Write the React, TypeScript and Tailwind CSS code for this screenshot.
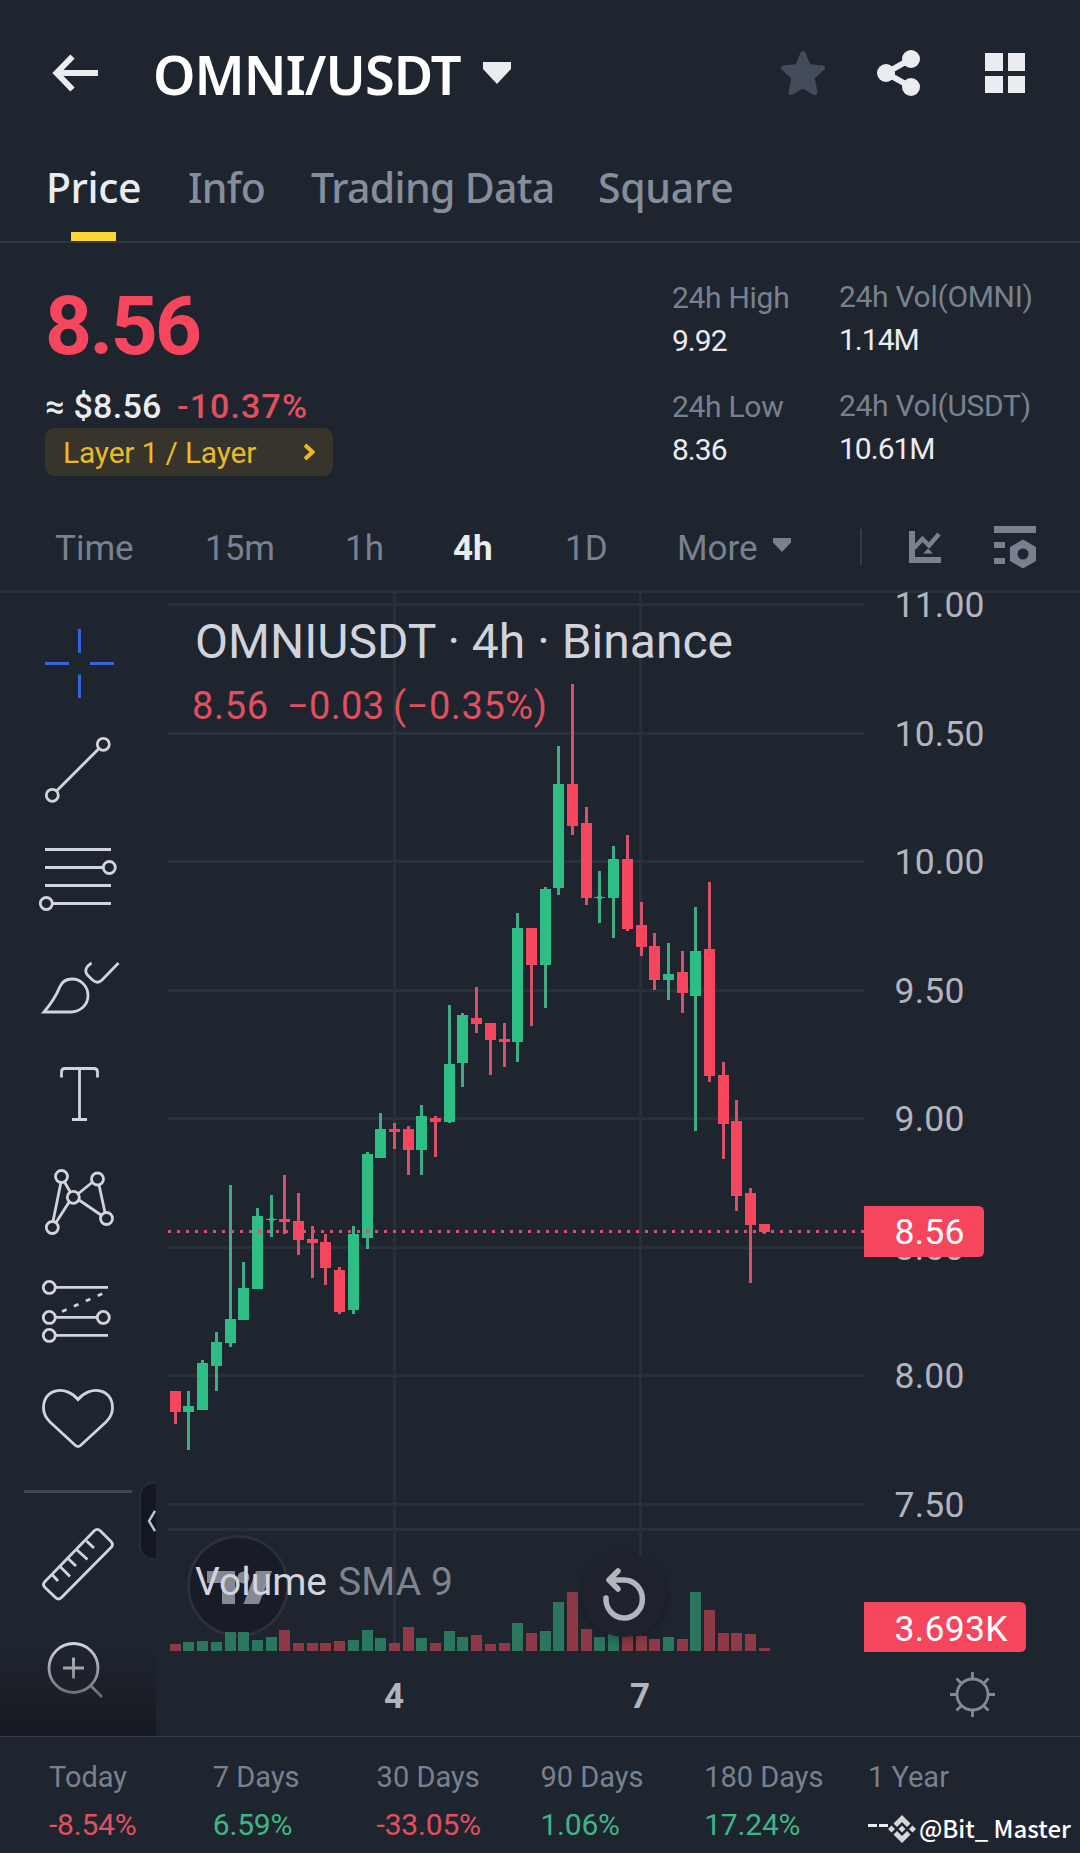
import React from "react";

const UP = "#2ebd85";
const DOWN = "#f6465d";
const INK = "#d1d4dc";

// [high, body top, body bottom, low, volume, rising]
const candles: [number, number, number, number, number, 0 | 1][] = [
  [1391, 1391, 1412, 1424, 7, 0],
  [1391, 1406, 1412, 1450, 9, 1],
  [1360, 1363, 1410, 1410, 10, 1],
  [1332, 1342, 1366, 1391, 9, 1],
  [1185, 1319, 1343, 1347, 19, 1],
  [1262, 1288, 1320, 1320, 19, 1],
  [1208, 1216, 1289, 1289, 11, 1],
  [1195, 1219, 1220, 1237, 14, 1],
  [1175, 1219, 1222, 1234, 21, 0],
  [1193, 1221, 1240, 1255, 8, 0],
  [1226, 1239, 1243, 1278, 8, 0],
  [1234, 1242, 1268, 1285, 8, 0],
  [1267, 1270, 1312, 1314, 10, 0],
  [1226, 1234, 1310, 1314, 11, 1],
  [1152, 1154, 1238, 1249, 21, 1],
  [1113, 1129, 1158, 1158, 13, 1],
  [1123, 1129, 1132, 1149, 8, 0],
  [1126, 1129, 1150, 1175, 24, 0],
  [1105, 1116, 1150, 1175, 13, 1],
  [1116, 1118, 1122, 1157, 8, 0],
  [1005, 1064, 1122, 1123, 20, 1],
  [1013, 1015, 1063, 1087, 14, 1],
  [987, 1018, 1024, 1033, 16, 0],
  [1023, 1023, 1040, 1075, 7, 0],
  [1023, 1039, 1042, 1067, 8, 0],
  [913, 928, 1042, 1062, 28, 1],
  [928, 928, 965, 1026, 18, 0],
  [887, 889, 965, 1008, 20, 1],
  [746, 784, 888, 895, 49, 1],
  [684, 784, 826, 835, 59, 0],
  [807, 823, 898, 905, 22, 0],
  [871, 897, 898, 923, 14, 1],
  [846, 859, 898, 938, 18, 1],
  [835, 859, 929, 931, 18, 0],
  [902, 925, 947, 956, 15, 0],
  [933, 946, 980, 990, 12, 0],
  [943, 974, 980, 1000, 14, 1],
  [951, 972, 993, 1013, 12, 0],
  [907, 951, 996, 1131, 59, 1],
  [882, 949, 1076, 1082, 41, 0],
  [1062, 1075, 1124, 1159, 18, 0],
  [1100, 1121, 1196, 1211, 18, 0],
  [1188, 1193, 1225, 1283, 17, 0],
  [1224, 1224, 1232, 1234, 3, 0],
];

const priceLines = [
  { label: "11.00", y: 604.5 },
  { label: "10.50", y: 733.5 },
  { label: "10.00", y: 861.5 },
  { label: "9.50", y: 990.5 },
  { label: "9.00", y: 1118.5 },
  { label: "8.50", y: 1247.5 },
  { label: "8.00", y: 1375.5 },
  { label: "7.50", y: 1504.5 },
];

const candleX = (i: number) => 175.5 + Math.floor(i * 13.7 + 0.25);

const performance = [
  { label: "Today", value: "-8.54%", color: "text-[#e0505f]" },
  { label: "7 Days", value: "6.59%", color: "text-[#3fb586]" },
  { label: "30 Days", value: "-33.05%", color: "text-[#e0505f]" },
  { label: "90 Days", value: "1.06%", color: "text-[#3fb586]" },
  { label: "180 Days", value: "17.24%", color: "text-[#3fb586]" },
];

function Caret({ className }: { className: string }) {
  return (
    <svg viewBox="0 0 28 22" preserveAspectRatio="none" className={className}>
      <path d="M0 0H28V7L14 22L0 7Z" fill="currentColor" />
    </svg>
  );
}

function Header() {
  return (
    <header className="flex h-[146px] items-center pl-[52px] pr-[55px] text-[#eaecef]">
      <svg viewBox="0 0 46 38" className="h-[38px] w-[46px]">
        <path
          d="M46 19H5M20.5 2.5L4.5 19L20.5 35.5"
          fill="none"
          stroke="currentColor"
          strokeWidth="6"
        />
      </svg>
      <h1 className="ml-[55px] w-[330px] whitespace-nowrap pt-0.5 font-['Noto_Sans',sans-serif] text-[54px] font-semibold tracking-[-0.9px] text-white">
        OMNI/USDT
      </h1>
      <Caret className="h-[22px] w-7" />
      <svg
        viewBox="0 0 44 46"
        className="ml-auto h-[46px] w-11 text-[#434c5a]"
        fill="currentColor"
        stroke="currentColor"
        strokeWidth="5"
        strokeLinejoin="round"
      >
        <path d="M22 3.5L27.5 16.5L41.5 18L31 27.5L34 42.5L22 35.5L10 42.5L13 27.5L2.5 18L16.5 16.5Z" />
      </svg>
      <svg viewBox="0 0 43 46" className="ml-[52px] h-[46px] w-[43px]">
        <path
          d="M34 9L9 23L34 37"
          fill="none"
          stroke="currentColor"
          strokeWidth="6"
        />
        <circle cx="34" cy="9" r="9" fill="currentColor" />
        <circle cx="9" cy="23" r="9" fill="currentColor" />
        <circle cx="34" cy="37" r="9" fill="currentColor" />
      </svg>
      <div className="ml-[65px] grid h-10 w-10 grid-cols-2 gap-[5px]">
        <span className="bg-[#eaecef]" />
        <span className="bg-[#eaecef]" />
        <span className="bg-[#eaecef]" />
        <span className="bg-[#eaecef]" />
      </div>
    </header>
  );
}

function PageTabs() {
  return (
    <nav className="grid h-[97px] grid-cols-[144px_123px_287px_auto] border-b-2 border-[#2f3742] pl-11 font-['Noto_Sans',sans-serif] text-[41px] font-medium leading-[82px] tracking-[-0.7px] text-[#848e9c]">
      <div className="flex w-[99px] flex-col items-center">
        <span className="tracking-[-0.4px] text-[#eaecef]">Price</span>
        <span className="mt-1 h-[9px] w-[45px] bg-[#fcd535]" />
      </div>
      <span>Info</span>
      <span className="whitespace-nowrap">Trading Data</span>
      <span className="tracking-[-0.3px]">Square</span>
    </nav>
  );
}

function Stat({ label, value }: { label: string; value: string }) {
  return (
    <div className="mb-[26px] whitespace-nowrap text-[30px] leading-10">
      <p className="tracking-[-0.3px] text-[#788190]">{label}</p>
      <p className="mt-[3px] tracking-[-1px] text-[#eaecef]">{value}</p>
    </div>
  );
}

function Summary() {
  return (
    <section className="flex h-[261px] pl-[45px]">
      <div className="w-[627px] pt-[42px]">
        <p className="text-[82px] font-bold leading-[83px] tracking-[-2.6px] text-[#f6465d]">
          8.56
        </p>
        <p className="mt-4 flex text-[34px] font-medium leading-[44px]">
          <span className="w-[132px] tracking-[0.3px] text-[#eaecef]">
            ≈ $8.56
          </span>
          <span className="tracking-[1.1px] text-[#e0505f]">-10.37%</span>
        </p>
        <div className="flex h-12 w-[288px] items-center justify-between rounded-[9px] bg-[#37342c] pl-[18px] pr-[18px] text-[#e9b92c]">
          <span className="text-[30px] tracking-[-0.2px]">Layer 1 / Layer</span>
          <svg viewBox="0 0 12 18" className="h-[18px] w-3">
            <path
              d="M2 2L9.5 9L2 16"
              fill="none"
              stroke="currentColor"
              strokeWidth="4"
            />
          </svg>
        </div>
      </div>
      <div className="w-[167px] pt-[35px]">
        <Stat label="24h High" value="9.92" />
        <Stat label="24h Low" value="8.36" />
      </div>
      <div className="pt-[34px]">
        <Stat label="24h Vol(OMNI)" value="1.14M" />
        <Stat label="24h Vol(USDT)" value="10.61M" />
      </div>
    </section>
  );
}

function Intervals() {
  return (
    <nav className="flex h-[89px] items-center border-b-[3px] border-[#29303b] pl-[55px] text-[35px] leading-[56px] text-[#788190]">
      <span className="w-[150px] pt-[3px]">Time</span>
      <span className="w-[140px] pt-[3px]">15m</span>
      <span className="w-[108px] pt-[3px]">1h</span>
      <span className="w-[112px] pt-[3px] font-bold text-[#eaecef]">4h</span>
      <span className="w-[112px] pt-[3px]">1D</span>
      <span className="w-24 pt-[3px]">More</span>
      <Caret className="-mt-1 h-3.5 w-[18px]" />
      <span className="ml-[69px] h-9 w-0.5 bg-[#343c48]" />
      <svg viewBox="0 0 32 32" className="ml-[47px] h-8 w-8">
        <path
          d="M3 0V29H32"
          fill="none"
          stroke="currentColor"
          strokeWidth="6"
        />
        <path
          d="M5 17L13.5 8L20 14.5L30 3"
          fill="none"
          stroke="currentColor"
          strokeWidth="4.5"
        />
        <path d="M19 17.5L24 22.5H14Z" fill="currentColor" />
      </svg>
      <svg
        viewBox="0 0 42 42"
        className="ml-[53px] h-[42px] w-[42px]"
        fill="currentColor"
      >
        <path d="M0 0H42V7H0ZM0 16H11V22H0ZM0 32H11V38H0Z" />
        <path
          fillRule="evenodd"
          d="M29 13.5L42 21V35L29 42.5L16 35V21ZM29 22.5A5.5 5.5 0 1 0 29 33.5A5.5 5.5 0 1 0 29 22.5Z"
        />
      </svg>
    </nav>
  );
}

function Tool({ children }: { children: React.ReactNode }) {
  return (
    <svg
      viewBox="0 0 156 108"
      className="h-[108px] w-[156px] shrink-0"
      fill="none"
      stroke={INK}
      strokeWidth="2.8"
    >
      {children}
    </svg>
  );
}

function Toolbar() {
  return (
    <aside className="relative flex w-[156px] shrink-0 flex-col pt-4">
      <Tool>
        <path
          d="M79.5 20V44M79.5 65.5V89M45 54.5H69M90 54.5H114"
          stroke="#3763dd"
          strokeWidth="3"
        />
      </Tool>
      <Tool>
        <circle cx="103.3" cy="27.3" r="6" />
        <circle cx="52.3" cy="78.3" r="6" />
        <path d="M99 31.5L56.5 74" />
      </Tool>
      <Tool>
        <path d="M45 24.5H111M45 42.5H103M45 60.5H111M53 78.5H111" />
        <circle cx="109.3" cy="42.5" r="6" />
        <circle cx="46.3" cy="78.5" r="6" />
      </Tool>
      <Tool>
        <path d="M44 79H71C80 79 88 72 88 62.5C88 53.5 81 46 72 46C66 46 62 49 60 53.5C57.5 59.5 55 66 44 79Z" />
        <path d="M91.5 30C86 33.5 84 38 87.5 42L92.5 47C96 50 99 50 102 47L118.500 30" />
      </Tool>
      <Tool>
        <path d="M61.5 36.5V31C61.5 28.5 62.5 27.5 65 27.5H94C96.5 27.5 97.5 28.5 97.5 31V36.5M79.5 27.5V78.5M72 78.5H87" />
      </Tool>
      <Tool>
        <path d="M60.8 34L53 72.5M64.5 33L70 42.5M69.5 52.5L56 73.5M78.5 44.5L92 33.5M79 51L101 66M99 36L105 63.5" />
        <circle cx="61.5" cy="27.5" r="6" />
        <circle cx="97.5" cy="30" r="6" />
        <circle cx="73.3" cy="48.3" r="6" />
        <circle cx="52.3" cy="78.5" r="6" />
        <circle cx="106.5" cy="69.5" r="6" />
      </Tool>
      <Tool>
        <circle cx="49.3" cy="30.4" r="6" />
        <circle cx="49.3" cy="60.4" r="6" />
        <circle cx="103.3" cy="60.4" r="6" />
        <circle cx="49.3" cy="78.4" r="6" />
        <path d="M56 30.4H108M56 60.4H97M56 78.4H108" />
        <path d="M62 54.5L104 36" strokeDasharray="5 8" />
      </Tool>
      <Tool>
        <path d="M78 34.5C66 20 43.5 23 43.5 43C43.5 48.5 46 53 50 57L75.5 80.5Q78 82.5 80.5 80.5L106 57C110 53 112.5 48.5 112.5 43C112.5 23 90 20 78 34.5Z" />
      </Tool>
      <div className="my-[17px] ml-6 h-[3px] w-[108px] shrink-0 bg-[#434651]" />
      <Tool>
        <path d="M94.5 20.5Q97.5 18 100.5 21L111 31.5Q114 34.5 111 37.5L61.5 87.5Q58.5 90.5 55.5 87.5L45 77.5Q42 74.5 45 71.5Z" />
        <path d="M52 64.500L58 71M60 56.5L70 66.5M68 48.5L76 56M77 40L87.5 49.5M86.5 31L94 38" />
      </Tool>
      <Tool>
        <circle cx="73.5" cy="50" r="24.5" />
        <path d="M63 50H84M73.5 39.5V60.5M90.5 67.5L102 79" />
      </Tool>
      <div className="absolute bottom-0 left-0 h-[92px] w-full bg-gradient-to-t from-[#161922] to-[#16192200]" />
      {/* collapse handle */}
      <div className="absolute right-0 top-[889px] flex h-[78px] w-[17px] items-center justify-end rounded-l-[14px] border-2 border-r-0 border-[#272d38] bg-[#131722]">
        <svg viewBox="0 0 9 22" className="h-[22px] w-[9px]">
          <path
            d="M8 1L2 11L8 21"
            fill="none"
            stroke="#b2c4cc"
            strokeWidth="2.5"
          />
        </svg>
      </div>
    </aside>
  );
}

function Chart() {
  return (
    <svg
      viewBox="156 593 924 1143"
      className="h-[1143px] w-[924px] overflow-visible font-[Roboto,sans-serif]"
    >
      <g stroke="#29303a" strokeWidth="3">
        {priceLines.map(({ label, y }) => (
          <path key={label} d={`M168 ${y}H864`} />
        ))}
        <path d="M394.5 593V1651M640.5 593V1651" />
        <path d="M168 1529.5H1080" />
      </g>

      <circle
        cx="238"
        cy="1586"
        r="49.5"
        fill="#181c27"
        stroke="#2b303b"
        strokeWidth="3"
      />

      {candles.map(([high, top, bottom, low, volume, rising], i) => (
        <g key={i}>
          <rect
            x={candleX(i) - 5.5}
            y={1651 - volume}
            width="11"
            height={volume}
            fill={rising ? "#2a765f" : "#8d3948"}
          />
          <rect
            x={candleX(i) - 1.5}
            y={high}
            width="3"
            height={low - high}
            fill={rising ? "#41ac84" : "#d4526a"}
          />
          <rect
            x={candleX(i) - 5.5}
            y={top}
            width="11"
            height={bottom - top}
            fill={rising ? UP : DOWN}
          />
          {bottom - top === 1 && (
            <circle cx={candleX(i)} cy={top + 0.5} r="2.5" fill={UP} />
          )}
        </g>
      ))}
      <path
        d="M168 1231.5H864"
        stroke="#d4526a"
        strokeWidth="3"
        strokeDasharray="3 6"
      />

      <g fill="#868993">
        <path d="M207 1571H235V1604H222V1583H207Z" />
        <circle cx="243.5" cy="1577.5" r="6" />
        <path d="M256 1571H272L259 1604H243.5Z" />
      </g>

      <text x="195" y="658" fontSize="48" fill={INK} textLength="538">
        OMNIUSDT · 4h · Binance
      </text>
      <g fontSize="38" fill="#e0505f">
        <text x="192" y="718.5" textLength="76">
          8.56
        </text>
        <text x="287" y="718.5" textLength="97">
          −0.03
        </text>
        <text x="393" y="718.5" textLength="154">
          (−0.35%)
        </text>
      </g>
      <text x="195" y="1594.5" fontSize="39" fill={INK} textLength="132">
        Volume
      </text>
      <text x="338" y="1594.5" fontSize="39" fill="#7f838e" textLength="115">
        SMA 9
      </text>

      <g fontSize="35.5" fill="#b2b5be">
        {priceLines.map(({ label, y }) => (
          <text
            key={label}
            x="894.5"
            y={y + 12}
            textLength={label.length === 5 ? 90 : 70}
          >
            {label}
          </text>
        ))}
      </g>
      <path
        d="M864 1206H978Q984 1206 984 1212V1251Q984 1257 978 1257H864Z"
        fill={DOWN}
      />
      <path
        d="M864 1602H1020Q1026 1602 1026 1608V1646Q1026 1652 1020 1652H864Z"
        fill={DOWN}
      />
      <g fontSize="35.5" fill="#ffffff">
        <text x="894.5" y="1244" textLength="70">
          8.56
        </text>
        <text x="894.5" y="1640.5" textLength="113">
          3.693K
        </text>
      </g>

      <g fontSize="35" fontWeight="700" fill="#b2b5be" textAnchor="middle">
        <text x="394" y="1707.5">
          4
        </text>
        <text x="640" y="1707.5">
          7
        </text>
      </g>

      {/* reset view button */}
      <circle
        cx="624"
        cy="1595"
        r="42"
        fill="#1e222d"
        className="drop-shadow-[0_3px_4px_rgba(0,0,0,0.3)]"
      />
      <path
        d="M606 1598A18.2 19 0 1 0 624 1580H609M618 1571L609 1580L618 1589"
        fill="none"
        stroke="#b2b5be"
        strokeWidth="5.5"
        strokeLinecap="round"
        strokeLinejoin="round"
      />

      {/* axis settings */}
      <g
        transform="translate(972.5 1694.5)"
        fill="none"
        stroke="#868993"
        strokeWidth="2.8"
      >
        <circle r="15.5" />
        <path d="M0 -16V-22.5M0 16V22.5M-16 0H-22.5M16 0H22.5M-11 -11L-16 -16M11 -11L16 -16M-11 11L-16 16M11 11L16 16" />
      </g>
    </svg>
  );
}

function Performance() {
  return (
    <footer className="flex h-[117px] border-t border-[#343c47] pl-[49px] pt-5 text-[29px] leading-10">
      {performance.map(({ label, value, color }) => (
        <div key={label} className="w-[163.8px] shrink-0">
          <p className="text-[#788190]">{label}</p>
          <p className={`mt-2 text-[30px] tracking-[-0.2px] ${color}`}>
            {value}
          </p>
        </div>
      ))}
      <div className="whitespace-nowrap">
        <p className="text-[#788190]">1 Year</p>
        <div className="mt-2 flex h-10 items-center">
          <span className="h-[3px] w-[9px] bg-[#eaecef]" />
          <span className="ml-0.5 h-[3px] w-[9px] bg-[#eaecef]" />
          <svg
            viewBox="0 0 28 28"
            className="mt-2 h-7 w-7"
            fill="#d6d7d9"
          >
            <path d="M14 0L22.5 8.5L19 12L14 7L9 12L5.5 8.5ZM14 28L22.5 19.5L19 16L14 21L9 16L5.5 19.5ZM0 14L3.5 10.5L7 14L3.5 17.5ZM28 14L24.5 10.5L21 14L24.5 17.5ZM14 10.5L17.5 14L14 17.5L10.5 14Z" />
          </svg>
          <span className="ml-[3px] mt-1.5 font-['Noto_Sans_CJK_SC',sans-serif] text-[24px] font-medium text-white">
            @Bit_ Master
          </span>
        </div>
      </div>
    </footer>
  );
}

export default function App() {
  return (
    <div className="h-[1853px] w-[1080px] overflow-hidden bg-[#1f252f] font-[Roboto,sans-serif]">
      <Header />
      <PageTabs />
      <Summary />
      <Intervals />
      <main className="flex h-[1143px]">
        <Toolbar />
        <Chart />
      </main>
      <Performance />
    </div>
  );
}
